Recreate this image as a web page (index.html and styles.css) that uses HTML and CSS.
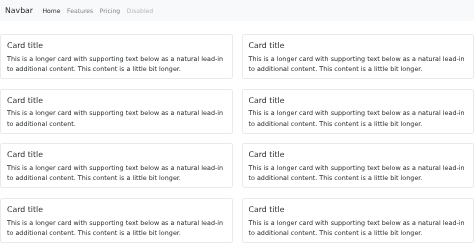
FILE: index.html
```html
<!DOCTYPE html>
<html lang="en">
<head>
  <meta charset="UTF-8" />
  <meta name="viewport" content="width=device-width, initial-scale=1.0"/>
  <title>Cards</title>
  <link rel="stylesheet" href="styles.css">
</head>
<body>
  <nav class="navbar">
    <span class="brand">Navbar</span>
    <a class="nav-link active" href="#">Home</a>
    <a class="nav-link" href="#">Features</a>
    <a class="nav-link" href="#">Pricing</a>
    <span class="nav-link disabled">Disabled</span>
  </nav>

  <div class="cards">
    <div class="card">
      <h5 class="card-title">Card title</h5>
      <p class="card-text">This is a longer card with supporting text below as a natural lead-in to additional content. This content is a little bit longer.</p>
    </div>
    <div class="card">
      <h5 class="card-title">Card title</h5>
      <p class="card-text">This is a longer card with supporting text below as a natural lead-in to additional content. This content is a little bit longer.</p>
    </div>
    <div class="card">
      <h5 class="card-title">Card title</h5>
      <p class="card-text">This is a longer card with supporting text below as a natural lead-in to additional content.</p>
    </div>
    <div class="card">
      <h5 class="card-title">Card title</h5>
      <p class="card-text">This is a longer card with supporting text below as a natural lead-in to additional content. This content is a little bit longer.</p>
    </div>
    <div class="card">
      <h5 class="card-title">Card title</h5>
      <p class="card-text">This is a longer card with supporting text below as a natural lead-in to additional content. This content is a little bit longer.</p>
    </div>
    <div class="card">
      <h5 class="card-title">Card title</h5>
      <p class="card-text">This is a longer card with supporting text below as a natural lead-in to additional content. This content is a little bit longer.</p>
    </div>
    <div class="card">
      <h5 class="card-title">Card title</h5>
      <p class="card-text">This is a longer card with supporting text below as a natural lead-in to additional content. This content is a little bit longer.</p>
    </div>
    <div class="card">
      <h5 class="card-title">Card title</h5>
      <p class="card-text">This is a longer card with supporting text below as a natural lead-in to additional content. This content is a little bit longer.</p>
    </div>
  </div>
</body>
</html>
```

FILE: styles.css
```css
body {
  font-family: 'DejaVu Sans', sans-serif;
  margin: 0;
  padding: 0;
  background-color: #fff;
  color: #2b2d2f;
}
.navbar {
  display: flex;
  align-items: center;
  height: 21px;
  padding: 0 5px;
  background-color: #f8f9fa;
  will-change: transform;
}
.brand {
  font-size: 7.75px;
  color: rgba(0, 0, 0, 0.85);
  margin-right: 9.5px;
}
.nav-link {
  font-size: 6.1px;
  color: rgba(0, 0, 0, 0.5);
  text-decoration: none;
  margin-right: 6.5px;
}
.nav-link.active {
  color: rgba(0, 0, 0, 0.85);
}
.nav-link.disabled {
  color: rgba(0, 0, 0, 0.28);
}
.cards {
  display: grid;
  grid-template-columns: 1fr 1fr;
  column-gap: 9px;
  row-gap: 9.7px;
  padding-top: 13px;
  will-change: transform;
}
.card {
  border: 1px solid #e9eaeb;
  border-radius: 2px;
  padding: 6px 6px 3.4px;
}
.card-title {
  font-size: 7.8px;
  font-weight: normal;
  line-height: 10px;
  margin: 0 0 2.6px;
}
.card-text {
  font-size: 6.4px;
  line-height: 10.5px;
  margin: 0;
}
```
